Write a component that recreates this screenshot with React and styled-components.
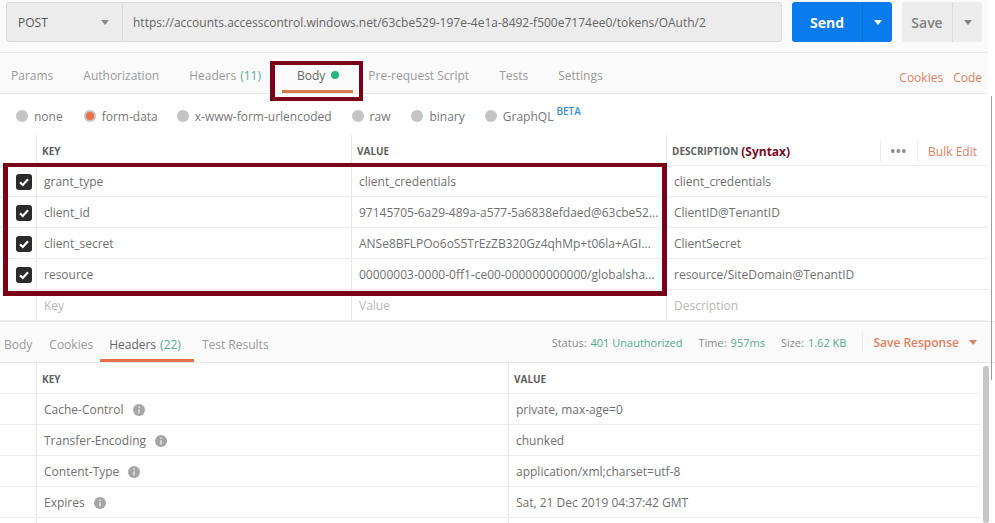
import React from "react";
import styled, { createGlobalStyle } from "styled-components";

const Global = createGlobalStyle`
  html, body { margin: 0; padding: 0; background: #fff; }
  * { box-sizing: border-box; }
`;

const Page = styled.div`
  position: relative;
  width: 995px;
  height: 523px;
  overflow: hidden;
  background: #fff;
  font-family: "Open Sans", sans-serif;
  font-size: 12px;
  color: #707070;
`;

const Toolbar = styled.div`
  display: flex;
  height: 53px;
  padding: 2px 6px 0 6px;
  background: #fafafa;
  border-bottom: 1px solid #ececec;
  width: 988px;
`;
const UrlGroup = styled.div`
  display: flex;
  flex-shrink: 0;
  width: 776px;
  height: 40px;
  background: #ececec;
  border: 1px solid #dcdcdc;
  border-radius: 3px;
`;
const Method = styled.div`
  display: flex;
  align-items: center;
  justify-content: space-between;
  width: 116px;
  padding: 0 13px 0 11px;
  border-right: 1px solid #dcdcdc;
  font-size: 12px;
  color: #555;
`;
const Caret = styled.span`
  display: inline-block;
  width: 0;
  height: 0;
  border-left: 4px solid transparent;
  border-right: 4px solid transparent;
  border-top: 5px solid ${(p) => p.color || "#8a8a8a"};
`;
const Url = styled.div`
  flex: 1;
  display: flex;
  align-items: center;
  padding-left: 10px;
  font-size: 12px;
  color: #666;
  white-space: nowrap;
`;
const SendButton = styled.div`
  display: flex;
  flex-shrink: 0;
  width: 100px;
  height: 40px;
  margin-left: 10px;
  background: #097bed;
  border-radius: 3px;
  color: #fff;
  font-size: 14px;
  font-weight: 700;
`;
const SaveButton = styled.div`
  display: flex;
  flex-shrink: 0;
  width: 80px;
  height: 40px;
  margin-left: 10px;
  background: #ececec;
  border-radius: 3px;
  color: #808080;
  font-size: 14px;
  font-weight: 600;
`;
const ButtonLabel = styled.div`
  flex: 1;
  display: flex;
  align-items: center;
  justify-content: center;
`;
const ButtonCaret = styled.div`
  display: flex;
  align-items: center;
  justify-content: center;
  width: ${(p) => p.$width}px;
  border-left: 1px solid ${(p) => p.$line};
`;

const TabBar = styled.div`
  display: flex;
  align-items: stretch;
  justify-content: space-between;
  width: 988px;
  height: 41px;
  padding: 0 6px 0 0;
  background: #fafafa;
  border-bottom: 1px solid #e8e8e8;
`;
const Tabs = styled.div`
  display: flex;
  align-items: stretch;
  margin-left: -4px;
`;
const Tab = styled.div`
  display: flex;
  align-items: center;
  padding: 7px ${(p) => (p.$active ? 14 : 15)}px 0 15px;
  margin-right: ${(p) => p.$gap || 0}px;
  color: ${(p) => (p.$active ? "#666" : "#9a9a9a")};
  border-bottom: 3px solid ${(p) => (p.$active ? "#d9794f" : "transparent")};
  white-space: nowrap;
`;
const Count = styled.span`
  margin-left: 4px;
  color: #58ad90;
`;
const Dot = styled.span`
  width: 8px;
  height: 8px;
  margin-left: 6px;
  border-radius: 50%;
  background: #26b47f;
`;
const Links = styled.div`
  display: flex;
  align-items: center;
  gap: 10px;
  padding-top: 9px;
`;
const Link = styled.span`
  color: #e2805e;
`;

const BodyTypes = styled.div`
  display: flex;
  align-items: center;
  width: 988px;
  height: 41px;
  padding: 3px 0 0 16px;
`;
const Radio = styled.div`
  display: flex;
  align-items: center;
  margin-right: ${(p) => p.$gap}px;
  color: #777;
`;
const RadioDot = styled.span`
  display: flex;
  align-items: center;
  justify-content: center;
  width: 12px;
  height: 12px;
  margin-right: 6px;
  border-radius: 50%;
  background: #c4c4c4;
  &::after {
    content: "";
    display: ${(p) => (p.$on ? "block" : "none")};
    width: 8px;
    height: 8px;
    border-radius: 50%;
    background: #e9714a;
  }
`;
const Beta = styled.sup`
  margin-left: 3px;
  margin-top: -10px;
  font-size: 10px;
  font-weight: 600;
  line-height: 1;
  color: #3d8fd1;
`;

const Row = styled.div`
  display: grid;
  grid-template-columns: ${(p) => p.$columns};
  width: ${(p) => p.$width}px;
  height: 31px;
  border-bottom: 1px solid #ececec;
`;
const Cell = styled.div`
  display: flex;
  align-items: center;
  min-width: 0;
  padding: 1px 7px 0;
  border-left: ${(p) => (p.$first ? "none" : "1px solid #e8e8e8")};
  color: ${(p) => (p.$ghost ? "#b8b8b8" : "#707070")};
  white-space: nowrap;
`;
const HeadCell = styled(Cell)`
  padding: 2px 0 0 5px;
  font-size: 10px;
  font-weight: 700;
  color: #5f5f5f;
`;
const Syntax = styled.span`
  margin-left: 3px;
  font-size: 12px;
  color: #7b0a22;
`;
const HeadTools = styled.div`
  display: flex;
  align-items: center;
  margin-left: auto;
  height: 100%;
`;
const More = styled.span`
  display: flex;
  align-items: center;
  height: 22px;
  padding: 0 10px;
  border-left: 1px solid #ececec;
  border-right: 1px solid #ececec;
  color: #8a8a8a;
  font-size: 12px;
  letter-spacing: 1px;
`;
const BulkEdit = styled(Link)`
  margin: 0 11px 0 10px;
  font-size: 12px;
  font-weight: 400;
`;
const CheckCell = styled.div`
  display: flex;
  align-items: center;
  padding: 1px 0 0 16px;
`;
const CheckBox = styled.span`
  display: flex;
  align-items: center;
  justify-content: center;
  width: 16px;
  height: 16px;
  border-radius: 3px;
  background: #2b2b2b;
`;
const InfoBadge = styled.span`
  display: flex;
  align-items: center;
  justify-content: center;
  width: 12px;
  height: 12px;
  margin-left: 9px;
  border-radius: 50%;
  background: #a5a5a5;
`;

const ResponseBar = styled(TabBar)`
  width: 995px;
  background: #fafafa;
  border-top: 1px solid #e8e8e8;
  border-bottom: 1px solid #e8e8e8;
  padding: 0 18px 0 0;
  height: 42px;
`;
const ResponseTabs = styled.div`
  display: flex;
  align-items: stretch;
  padding-left: 4px;
`;
const ResponseTab = styled(Tab)`
  padding: 7px ${(p) => (p.$active ? 13 : p.$first ? 8 : 7)}px 0 ${(p) => (p.$first ? 0 : 9)}px;
  margin-right: ${(p) => p.$gap || 0}px;
  border-bottom-color: ${(p) => (p.$active ? "#e9714a" : "transparent")};
`;
const Metrics = styled.div`
  display: flex;
  align-items: center;
  font-size: 11px;
  color: #8a8a8a;
`;
const Metric = styled.span`
  margin-right: 16px;
`;
const Good = styled.span`
  margin-left: 4px;
  color: #52ab8e;
`;
const SaveResponse = styled.span`
  display: flex;
  align-items: center;
  height: 20px;
  padding-left: 10px;
  border-left: 1px solid #ececec;
  color: #e2805e;
  font-size: 12px;
  font-weight: 600;
  gap: 10px;
`;

const ResponseBody = styled.div`
  width: 980px;
`;

/* annotation boxes drawn over the screenshot */
const Highlight = styled.div`
  position: absolute;
  left: ${(p) => p.$x}px;
  top: ${(p) => p.$y}px;
  width: ${(p) => p.$w}px;
  height: ${(p) => p.$h}px;
  border-style: solid;
  border-color: #7a0019;
  border-width: ${(p) => p.$b};
  pointer-events: none;
`;
const Scrollbar = styled.div`
  position: absolute;
  left: 983px;
  top: 366px;
  width: 6px;
  height: 157px;
  border-radius: 3px;
  background: #c6c6c6;
`;
const WindowEdge = styled.div`
  position: absolute;
  left: 991px;
  top: 96px;
  width: 1px;
  height: 284px;
  background: #9c9c9c;
`;

const Check = () => (
  <svg width="12" height="12" viewBox="0 0 12 12">
    <path d="M2 6.4 L4.8 9 L10 3.2" fill="none" stroke="#fff" strokeWidth="2.2" />
  </svg>
);

const Info = () => (
  <svg width="6" height="8" viewBox="0 0 6 8">
    <path d="M3 0.5 V2 M3 3.2 V7.5" stroke="#e4e4e4" strokeWidth="1.6" fill="none" />
  </svg>
);

const requestColumns = "36px 315px 315px 1fr";
const responseColumns = "36px 472px 1fr";

const params = [
  ["grant_type", "client_credentials", "client_credentials"],
  ["client_id", "97145705-6a29-489a-a577-5a6838efdaed@63cbe52...", "ClientID@TenantID"],
  ["client_secret", "ANSe8BFLPOo6oS5TrEzZB320Gz4qhMp+t06la+AGI...", "ClientSecret"],
  ["resource", "00000003-0000-0ff1-ce00-000000000000/globalsha...", "resource/SiteDomain@TenantID"],
];

const headers = [
  ["Cache-Control", "private, max-age=0"],
  ["Transfer-Encoding", "chunked"],
  ["Content-Type", "application/xml;charset=utf-8"],
  ["Expires", "Sat, 21 Dec 2019 04:37:42 GMT"],
];

const radios = [
  ["none", 21],
  ["form-data", 19],
  ["x-www-form-urlencoded", 20],
  ["raw", 21],
  ["binary", 20],
];

export default function App() {
  return (
    <Page>
      <Global />
      <Toolbar>
        <UrlGroup>
          <Method>
            POST
            <Caret />
          </Method>
          <Url>https://accounts.accesscontrol.windows.net/63cbe529-197e-4e1a-8492-f500e7174ee0/tokens/OAuth/2</Url>
        </UrlGroup>
        <SendButton>
          <ButtonLabel>Send</ButtonLabel>
          <ButtonCaret $width={30} $line="#0a6fd6">
            <Caret color="#fff" />
          </ButtonCaret>
        </SendButton>
        <SaveButton>
          <ButtonLabel>Save</ButtonLabel>
          <ButtonCaret $width={30} $line="#dcdcdc">
            <Caret color="#808080" />
          </ButtonCaret>
        </SaveButton>
      </Toolbar>

      <TabBar>
        <Tabs>
          <Tab>Params</Tab>
          <Tab>Authorization</Tab>
          <Tab $gap={6}>
            Headers<Count>(11)</Count>
          </Tab>
          <Tab $active>
            Body<Dot />
          </Tab>
          <Tab>Pre-request Script</Tab>
          <Tab>Tests</Tab>
          <Tab>Settings</Tab>
        </Tabs>
        <Links>
          <Link>Cookies</Link>
          <Link>Code</Link>
        </Links>
      </TabBar>

      <BodyTypes>
        {radios.map(([label, gap]) => (
          <Radio key={label} $gap={gap}>
            <RadioDot $on={label === "form-data"} />
            {label}
          </Radio>
        ))}
        <Radio $gap={0}>
          <RadioDot />
          GraphQL
          <Beta>BETA</Beta>
        </Radio>
      </BodyTypes>

      <Row $columns={requestColumns} $width={988}>
        <Cell $first />
        <HeadCell>KEY</HeadCell>
        <HeadCell>VALUE</HeadCell>
        <HeadCell>
          DESCRIPTION <Syntax>(Syntax)</Syntax>
          <HeadTools>
            <More>•••</More>
            <BulkEdit>Bulk Edit</BulkEdit>
          </HeadTools>
        </HeadCell>
      </Row>
      {params.map(([key, value, description]) => (
        <Row key={key} $columns={requestColumns} $width={988}>
          <CheckCell>
            <CheckBox>
              <Check />
            </CheckBox>
          </CheckCell>
          <Cell>{key}</Cell>
          <Cell>{value}</Cell>
          <Cell>{description}</Cell>
        </Row>
      ))}
      <Row $columns={requestColumns} $width={988}>
        <Cell $first />
        <Cell $ghost>Key</Cell>
        <Cell $ghost>Value</Cell>
        <Cell $ghost>Description</Cell>
      </Row>

      <ResponseBar>
        <ResponseTabs>
          <ResponseTab $first>Body</ResponseTab>
          <ResponseTab>Cookies</ResponseTab>
          <ResponseTab $active $gap={-1}>
            Headers<Count>(22)</Count>
          </ResponseTab>
          <ResponseTab>Test Results</ResponseTab>
        </ResponseTabs>
        <Metrics>
          <Metric>
            Status:<Good>401 Unauthorized</Good>
          </Metric>
          <Metric>
            Time:<Good>957ms</Good>
          </Metric>
          <Metric>
            Size:<Good>1.62 KB</Good>
          </Metric>
          <SaveResponse>
            Save Response
            <Caret color="#e2805e" />
          </SaveResponse>
        </Metrics>
      </ResponseBar>

      <ResponseBody>
        <Row $columns={responseColumns} $width={980}>
          <Cell $first />
          <HeadCell>KEY</HeadCell>
          <HeadCell>VALUE</HeadCell>
        </Row>
        {headers.map(([key, value]) => (
          <Row key={key} $columns={responseColumns} $width={980}>
            <Cell $first />
            <Cell>
              {key}
              <InfoBadge>
                <Info />
              </InfoBadge>
            </Cell>
            <Cell>{value}</Cell>
          </Row>
        ))}
        <Row $columns={responseColumns} $width={980}>
          <Cell $first />
          <Cell />
          <Cell />
        </Row>
      </ResponseBody>

      <Scrollbar />
      <WindowEdge />
      <Highlight $x={270} $y={61} $w={93} $h={40} $b="4px 4px 4px 5px" />
      <Highlight $x={3} $y={163} $w={664} $h={133} $b="4px 5px 5px 5px" />
    </Page>
  );
}
